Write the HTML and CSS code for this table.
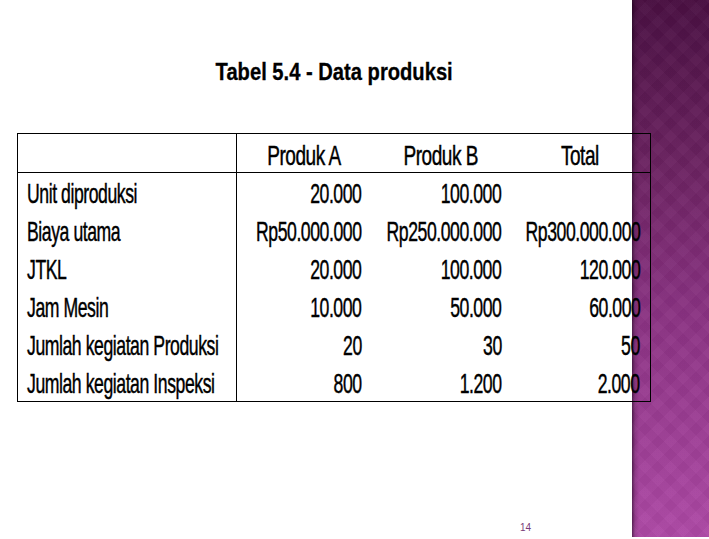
FILE: index.html
```html
<!DOCTYPE html>
<html>
<head>
<meta charset="utf-8">
<link rel="stylesheet" href="styles.css">
</head>
<body>
<div class="slide">
  <div class="content">
    <h1 class="title"><span>Tabel 5.4 - Data produksi</span></h1>
    <table class="data">
      <colgroup><col class="c1"><col class="c2"><col class="c3"><col class="c4"></colgroup>
      <thead>
        <tr><th class="lbl"></th><th><span>Produk A</span></th><th><span>Produk B</span></th><th><span>Total</span></th></tr>
      </thead>
      <tbody>
        <tr><td class="lbl"><span>Unit diproduksi</span></td><td><span>20.000</span></td><td><span>100.000</span></td><td></td></tr>
        <tr><td class="lbl"><span>Biaya utama</span></td><td><span>Rp50.000.000</span></td><td><span>Rp250.000.000</span></td><td><span>Rp300.000.000</span></td></tr>
        <tr><td class="lbl"><span>JTKL</span></td><td><span>20.000</span></td><td><span>100.000</span></td><td><span>120.000</span></td></tr>
        <tr><td class="lbl"><span>Jam Mesin</span></td><td><span>10.000</span></td><td><span>50.000</span></td><td><span>60.000</span></td></tr>
        <tr><td class="lbl"><span>Jumlah kegiatan Produksi</span></td><td><span>20</span></td><td><span>30</span></td><td><span>50</span></td></tr>
        <tr><td class="lbl"><span>Jumlah kegiatan Inspeksi</span></td><td><span>800</span></td><td><span>1.200</span></td><td><span>2.000</span></td></tr>
      </tbody>
    </table>
    <div class="pagenum">14</div>
  </div>
</div>
</body>
</html>
```

FILE: styles.css
```css
html, body {
  margin: 0;
  padding: 0;
}
body {
  width: 709px;
  height: 539px;
  overflow: hidden;
  background: #fff;
  font-family: "Liberation Sans", Arial, sans-serif;
}
.slide {
  width: 709px;
  height: 539px;
  background:
    linear-gradient(to right, rgba(20,0,20,0.55), rgba(20,0,20,0.15) 3px, rgba(255,255,255,0) 7px) 632px 0 / 8px 537px no-repeat,
    repeating-linear-gradient(45deg, rgba(255,255,255,0.02) 0 9px, rgba(0,0,0,0.02) 9px 18px) 632px 0 / 77px 537px no-repeat,
    repeating-linear-gradient(-45deg, rgba(255,255,255,0.02) 0 9px, rgba(0,0,0,0.02) 9px 18px) 632px 0 / 77px 537px no-repeat,
    linear-gradient(to bottom, #4a0f42 0%, #6a2260 30%, #8c3384 60%, #ad48a5 100%) 632px 0 / 77px 537px no-repeat,
    #fff;
  overflow: hidden;
}
.content {
  margin-left: 17px;
  width: 633px;
  padding-top: 58px;
}
.title {
  margin: 0;
  text-align: center;
  font-size: 24px;
  line-height: 28px;
  font-weight: bold;
  color: #000;
  padding-left: 2px;
}
.title span {
  display: inline-block;
  transform: scaleX(0.84);
  transform-origin: center;
  white-space: nowrap;
  -webkit-text-stroke: 0.3px #000;
}
.data {
  margin-top: 47px;
  width: 633px;
  table-layout: fixed;
  border-collapse: collapse;
  border: 1px solid #000;
  font-size: 28px;
  color: #000;
}
.c1 { width: 219px; }
.c2 { width: 134px; }
.c3 { width: 140px; }
.c4 { width: 140px; }
.data th, .data td {
  padding: 0;
  white-space: nowrap;
  overflow: visible;
  line-height: 30px;
}
.data th {
  height: 38px;
  font-weight: normal;
  text-align: center;
  border-bottom: 1px solid #000;
}
.data td {
  height: 38px;
  text-align: right;
  padding-right: 9px;
}
.data .lbl {
  text-align: left;
  padding-left: 9px;
  padding-right: 0;
  border-right: 1px solid #000;
}
.data span {
  display: inline-block;
  letter-spacing: -0.7px;
  transform: translateY(2px) scaleX(0.63);
  -webkit-text-stroke: 0.45px #000;
}
.data th span {
  transform-origin: center;
  transform: translateY(3px) scaleX(0.68);
  margin: 0 -60px;
}
.data td span {
  transform-origin: right center;
  margin-left: -120px;
}
.data td.lbl span {
  transform-origin: left center;
  margin-left: 0;
  margin-right: -120px;
}
.data td:last-child { padding-right: 10px; }
.pagenum {
  margin-top: 120px;
  padding-left: 503px;
  font-size: 10px;
  color: #7a3a78;
}
```
